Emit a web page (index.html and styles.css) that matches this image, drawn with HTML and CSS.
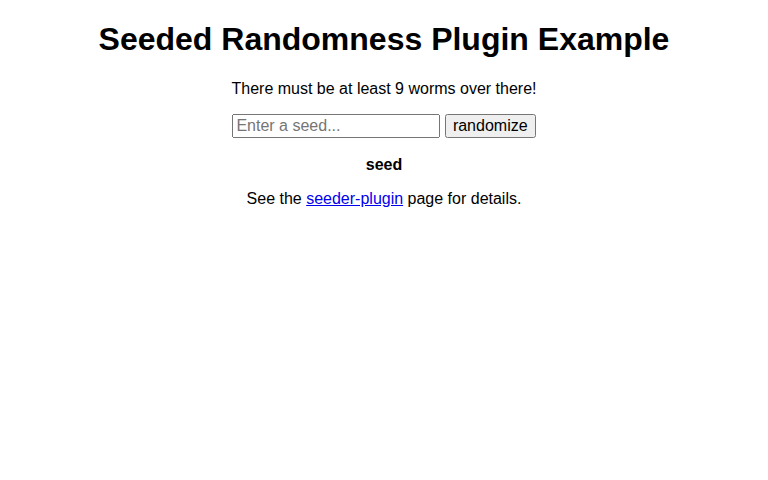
FILE: index.html
```html
<!DOCTYPE html>
<html lang="en">
<head>
    <meta charset="UTF-8">
    <meta name="viewport" content="width=device-width, initial-scale=1.0">
    <title>Seeded Randomness Plugin Example</title>
    <link rel="stylesheet" href="styles.css">
</head>
<body>
    <h1>Seeded Randomness Plugin Example</h1>
    <p>There must be at least 9 worms over there!</p>
    <p class="seed-row">
        <input type="text" id="seed" placeholder="Enter a seed...">
        <button id="randomize">randomize</button>
    </p>
    <p class="seed-value"><b>seed</b></p>
    <p>See the <a href="#">seeder-plugin</a> page for details.</p>
</body>
</html>
```

FILE: styles.css
```css
body {
    font-family: "Liberation Sans", Arial, sans-serif;
    margin: 0;
    text-align: center;
}
h1 {
    font-size: 32px;
}
input,
button {
    font-family: inherit;
    font-size: 16px;
}
input {
    width: 200px;
    padding: 1px 2px;
}
button {
    padding: 1px 6px;
}
.seed-row {
    margin-bottom: 18px;
}
a {
    color: #0000ee;
}
```
